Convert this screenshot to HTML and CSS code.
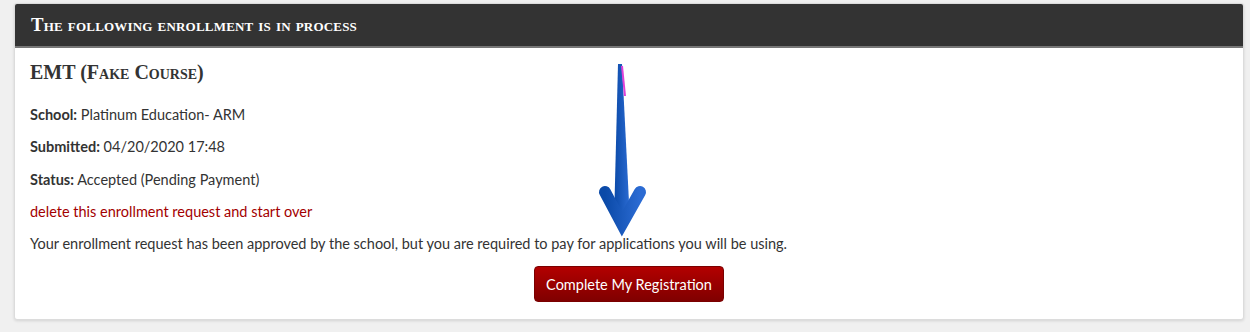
FILE: index.html
```html
<!DOCTYPE html>
<html>
<head>
  <meta charset="UTF-8">
  <title>Enrollment</title>
  <link rel="stylesheet" href="styles.css">
</head>
<body>
  <div class="panel">
    <div class="panel-heading">The following enrollment is in process</div>
    <div class="panel-body">
      <h3 class="course-title">EMT (Fake Course)</h3>
      <p><strong>School:</strong> Platinum Education- ARM</p>
      <p><strong>Submitted:</strong> 04/20/2020 17:48</p>
      <p><strong>Status:</strong> Accepted (Pending Payment)</p>
      <p><a href="#" class="delete-link">delete this enrollment request and start over</a></p>
      <p>Your enrollment request has been approved by the school, but you are required to pay for applications you will be using.</p>
      <div class="actions">
        <button class="btn-complete">Complete My Registration</button>
      </div>
    </div>

    <!-- annotation arrow drawn over the screenshot -->
    <svg class="annotation" width="60" height="180" viewBox="595 58 60 180">
      <defs>
        <linearGradient id="arrowFill" x1="0" y1="0" x2="1" y2="0">
          <stop offset="0" stop-color="#0b4aa8"/>
          <stop offset="1" stop-color="#2b6bd3"/>
        </linearGradient>
      </defs>
      <polygon points="618,64 622,64 630,222 614,222" fill="url(#arrowFill)"/>
      <polygon points="621,66 623,66 626,96 624,96" fill="#e040d8"/>
      <path d="M605,192 L622,224 L640,192" fill="none" stroke="url(#arrowFill)" stroke-width="12" stroke-linecap="round" stroke-linejoin="miter"/>
    </svg>
  </div>
</body>
</html>
```

FILE: styles.css
```css
body {
  margin: 0;
  padding: 3px 6px 12px 14px;
  background-color: #f0f0f0;
  font-family: Lato, 'Noto Sans', sans-serif;
  font-size: 14.5px;
  color: #333;
}

.panel {
  position: relative;
  background-color: #fff;
  border: 1px solid #dcdcdc;
  border-radius: 3px;
  box-shadow: 0 1px 3px rgba(0,0,0,0.12);
}

.panel-heading {
  background-color: #333;
  color: #fff;
  height: 42px;
  line-height: 42px;
  padding: 0 16px;
  border-bottom: 2px solid #777;
  border-radius: 2px 2px 0 0;
  font-family: 'Liberation Serif', 'DejaVu Serif', serif;
  font-variant: small-caps;
  font-weight: bold;
  font-size: 18.8px;
  letter-spacing: 0.2px;
}

.panel-body {
  padding: 12px 15px 17px 15px;
}

.course-title {
  margin: 0 0 21px;
  font-family: 'Liberation Serif', 'DejaVu Serif', serif;
  font-variant: small-caps;
  font-weight: bold;
  font-size: 20px;
  line-height: 24px;
  color: #333;
}

.panel-body p {
  margin: 0 0 12px;
  line-height: 20.3px;
}

.delete-link {
  color: #a30000;
  text-decoration: none;
}

.actions {
  text-align: center;
}

.btn-complete {
  padding: 0 11px;
  height: 36px;
  white-space: nowrap;
  font-family: Lato, 'Noto Sans', sans-serif;
  font-size: 14.5px;
  color: #fff;
  background: linear-gradient(#b30000, #800000);
  border: 1px solid #7a0000;
  border-radius: 4px;
  cursor: pointer;
}

.annotation {
  position: absolute;
  left: 580px;
  top: 54px;
}
```
